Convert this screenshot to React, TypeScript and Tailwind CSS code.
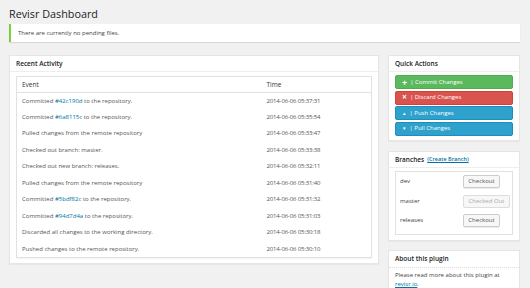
import React from 'react';

const events = [
  { text: 'Committed', hash: '#42c190d', rest: 'to the repository.', time: '2014-06-06 05:37:31' },
  { text: 'Committed', hash: '#6a8115c', rest: 'to the repository.', time: '2014-06-06 05:35:54' },
  { text: 'Pulled changes from the remote repository', time: '2014-06-06 05:33:47' },
  { text: 'Checked out branch: master.', time: '2014-06-06 05:33:38' },
  { text: 'Checked out new branch: releases.', time: '2014-06-06 05:32:11' },
  { text: 'Pulled changes from the remote repository', time: '2014-06-06 05:31:40' },
  { text: 'Committed', hash: '#5bdf82c', rest: 'to the repository.', time: '2014-06-06 05:31:32' },
  { text: 'Committed', hash: '#94d7d4a', rest: 'to the repository.', time: '2014-06-06 05:31:03' },
  { text: 'Discarded all changes to the working directory.', time: '2014-06-06 05:30:18' },
  { text: 'Pushed changes to the remote repository.', time: '2014-06-06 05:30:10' },
];

const branches = [
  { name: 'dev', current: false },
  { name: 'master', current: true },
  { name: 'releases', current: false },
];

function Panel({ title, children, className = '' }: { title: React.ReactNode; children: React.ReactNode; className?: string }) {
  return (
    <div className={`bg-white border border-[#e5e5e5] shadow-[0_1px_1px_rgba(0,0,0,0.04)] ${className}`}>
      <div className="h-[16px] flex items-center px-[6px] border-b border-[#eeeeee] text-[6.5px] font-semibold text-[#222]">
        {title}
      </div>
      {children}
    </div>
  );
}

export default function App() {
  return (
    <div
      className="w-[530px] h-[288px] overflow-hidden bg-[#f1f1f1] pl-[9px] pr-[10px] text-[#444]"
      style={{ fontFamily: '"Open Sans", "Liberation Sans", sans-serif' }}
    >
      <h1 className="pt-[6px] h-[24px] text-[10.8px] leading-[16px] text-[#222] font-normal">Revisr Dashboard</h1>

      {/* Notice */}
      <div className="h-[18px] flex items-center bg-white border-l-2 border-[#7ad03a] pl-[7px] text-[6px] shadow-[0_1px_1px_rgba(0,0,0,0.1)]">
        There are currently no pending files.
      </div>

      <div className="flex gap-[9px] mt-[13px] items-start">
        {/* Recent Activity */}
        <Panel title="Recent Activity" className="w-[370px] h-[209px]">
          <div className="px-[6px] pt-[4px]">
            <table className="w-full border border-[#e1e1e1] text-[6px] text-[#555] shadow-[0_1px_1px_rgba(0,0,0,0.04)]" style={{ borderCollapse: 'collapse' }}>
              <thead>
                <tr className="h-[16px] border-b border-[#e1e1e1]">
                  <th className="w-[245px] text-left font-normal text-[6.5px] text-[#333] pl-[5px]">Event</th>
                  <th className="text-left font-normal text-[6.5px] text-[#333] pl-[5px]">Time</th>
                </tr>
              </thead>
              <tbody>
                {events.map((e, i) => (
                  <tr key={i} className="h-[16.5px]">
                    <td className="pl-[5px]">
                      {e.text}
                      {e.hash && (
                        <>
                          {' '}
                          <span className="text-[#0074a2]">{e.hash}</span> {e.rest}
                        </>
                      )}
                    </td>
                    <td className="pl-[5px] tracking-[-0.15px]">{e.time}</td>
                  </tr>
                ))}
              </tbody>
            </table>
          </div>
        </Panel>

        {/* Right column */}
        <div className="w-[132px] flex flex-col">
          <Panel title="Quick Actions" className="h-[86px]">
            <div className="px-[6px] pt-[3px] flex flex-col gap-[1.5px]">
              <button className="h-[14px] flex items-center gap-[3px] pl-[6px] bg-[#5cb85c] border border-[#4cae4c] rounded-[2px] text-white text-[6px]">
                <span className="font-bold text-[9px] leading-none">+</span>
                <span>| Commit Changes</span>
              </button>
              <button className="h-[14px] flex items-center gap-[3px] pl-[6px] bg-[#d9534f] border border-[#d43f3a] rounded-[2px] text-white text-[6px]">
                <span className="font-bold text-[8.5px] leading-none">×</span>
                <span>| Discard Changes</span>
              </button>
              <button className="h-[14px] flex items-center gap-[3px] pl-[6px] bg-[#2ea2cc] border border-[#1e8cbe] rounded-[2px] text-white text-[6px]">
                <span className="text-[4.5px] leading-none">▲</span>
                <span>| Push Changes</span>
              </button>
              <button className="h-[14px] flex items-center gap-[3px] pl-[6px] bg-[#2ea2cc] border border-[#1e8cbe] rounded-[2px] text-white text-[6px]">
                <span className="text-[4.5px] leading-none">▼</span>
                <span>| Pull Changes</span>
              </button>
            </div>
          </Panel>

          <Panel
            className="mt-[10px] h-[90px]"
            title={
              <>
                Branches{' '}
                <span className="ml-[3px] text-[#0074a2] underline text-[5.5px]">(Create Branch)</span>
              </>
            }
          >
            <div className="mx-[6px] mt-[3px] border border-[#e1e1e1] h-[64px] pt-[3px] flex flex-col">
              {branches.map((b) => (
                <div key={b.name} className="h-[20.5px] flex items-start pl-[4px]">
                  <span className="w-[63px] text-[6px] pt-[1px] leading-[10px]">{b.name}</span>
                  {b.current ? (
                    <span className="h-[13px] w-[47px] flex items-center justify-center border border-[#dddddd] bg-[#f7f7f7] rounded-[2px] text-[6px] text-[#aaaaaa]">
                      Checked Out
                    </span>
                  ) : (
                    <span className="h-[13px] w-[37px] flex items-center justify-center border border-[#cccccc] bg-[#f7f7f7] rounded-[2px] text-[6px] text-[#555] shadow-[0_1px_0_rgba(0,0,0,0.08)]">
                      Checkout
                    </span>
                  )}
                </div>
              ))}
            </div>
          </Panel>

          <div className="mt-[9px] h-[50px] bg-white border border-[#e5e5e5]">
            <div className="h-[17px] flex items-center px-[6px] border-b border-dotted border-[#dddddd] text-[6.5px] font-semibold text-[#222]">
              About this plugin
            </div>
            <div className="px-[6px] pt-[3px] text-[6px] leading-[9px]">
              Please read more about this plugin at
              <br />
              <span className="text-[#0074a2] underline">revisr.io</span>.
            </div>
          </div>
        </div>
      </div>
    </div>
  );
}
